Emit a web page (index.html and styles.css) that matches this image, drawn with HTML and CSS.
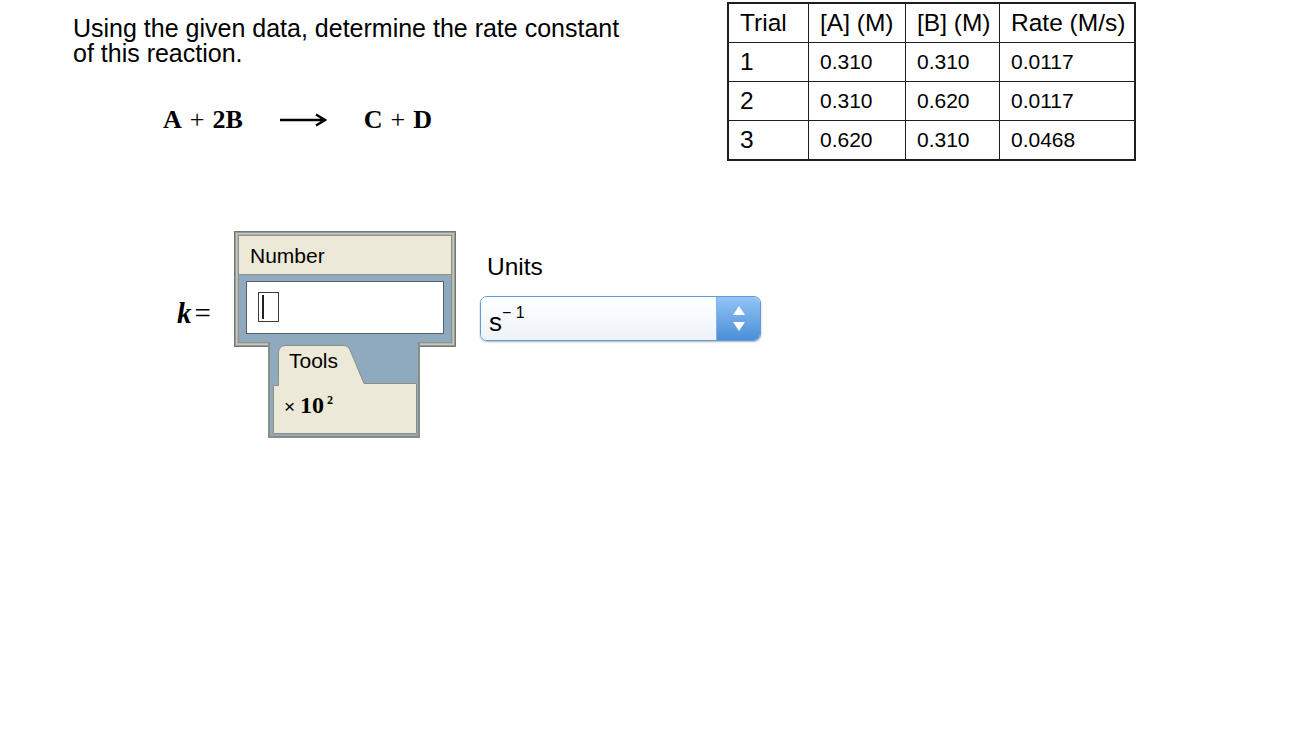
FILE: index.html
```html
<!DOCTYPE html>
<html>
<head>
<meta charset="utf-8">
<link rel="stylesheet" href="styles.css">
</head>
<body>
<div class="page">
  <div class="top">
    <div class="intro">
      <p class="question">Using the given data, determine the rate constant<br>of this reaction.</p>
      <div class="equation">
        <span class="eq-side">A<span class="op">+</span>2B</span>
        <svg class="arrow" width="48" height="14" viewBox="0 0 48 14"><path d="M1 7 H45 M37 1.5 L46 7 L37 12.5" fill="none" stroke="#000" stroke-width="2.6"/></svg>
        <span class="eq-side">C<span class="op">+</span>D</span>
      </div>
    </div>
    <table class="data">
      <tr class="head"><td class="c1">Trial</td><td class="c2">[A] (M)</td><td class="c3">[B] (M)</td><td class="c4">Rate (M/s)</td></tr>
      <tr><td class="num">1</td><td>0.310</td><td>0.310</td><td>0.0117</td></tr>
      <tr><td class="num">2</td><td>0.310</td><td>0.620</td><td>0.0117</td></tr>
      <tr><td class="num">3</td><td>0.620</td><td>0.310</td><td>0.0468</td></tr>
    </table>
  </div>

  <div class="answer-row">
    <div class="k-label"><i>k</i><span class="eq">=</span></div>
    <div class="widget">
      <div class="frame">
        <div class="frame-head">Number</div>
        <div class="frame-body">
          <div class="input"><span class="cursor-box"><span class="caret"></span></span></div>
        </div>
      </div>
      <div class="tools">
        <svg class="tools-shape" width="148" height="94" viewBox="0 0 148 94"><path d="M8.5 41.5 L8.5 11 Q8.5 3.5 16 3.5 L73 3.5 Q78 3.5 80 8 L94 41.5 L146.5 41.5 L146.5 91.5 L3.5 91.5 L3.5 43.5 L8.5 43.5 Z" fill="#ece9d8" stroke="#8c8f88" stroke-width="1"/></svg>
        <div class="tools-content">
          <div class="tab-label">Tools</div>
          <div class="panel-label"><span class="times">×</span> <b>10</b><sup>2</sup></div>
        </div>
      </div>
    </div>
    <div class="units">
      <div class="units-label">Units</div>
      <div class="select">
        <span class="sel-text">s<sup>−&nbsp;1</sup></span>
        <span class="sel-btn">
          <svg width="14" height="26" viewBox="0 0 14 26"><path d="M7 0 L13 9 L1 9 Z M1 16 L13 16 L7 25 Z" fill="#fff"/></svg>
        </span>
      </div>
    </div>
  </div>
</div>
</body>
</html>
```
FILE: styles.css
```css
body {
  margin: 0;
  background: #fff;
  color: #000;
  font-family: "Liberation Sans", Arial, sans-serif;
}

.top {
  display: flex;
  height: 160px;
}

.intro {
  width: 654px;
  padding-left: 73px;
  padding-top: 16px;
}

.question {
  margin: 0;
  font-size: 25px;
  line-height: 25px;
}

.equation {
  display: flex;
  align-items: center;
  margin-left: 90px;
  margin-top: 39px;
  height: 30px;
  font-family: "Liberation Serif", "Times New Roman", serif;
  font-weight: bold;
  font-size: 26px;
}

.eq-side .op {
  font-weight: normal;
  margin: 0 8px;
}

.arrow {
  margin: 0 37px 0 36px;
}

.data {
  margin-top: 2px;
  border-collapse: collapse;
  border: 2px solid #1e1e1e;
  height: 157px;
}

.data td {
  border: 1px solid #1e1e1e;
  padding: 0 0 0 11px;
  font-size: 21px;
  height: 38px;
  vertical-align: middle;
}

.data .head td,
.data td.num {
  font-size: 24.5px;
}

.data .c1 { width: 68px; }
.data .c2 { width: 85px; }
.data .c3 { width: 82px; }
.data .c4 { width: 123px; }

.answer-row {
  display: flex;
  align-items: flex-start;
  margin-top: 71px;
  padding-left: 177px;
}

.k-label {
  width: 57px;
  padding-top: 67px;
  line-height: 30px;
  font-family: "Liberation Serif", "Times New Roman", serif;
  font-size: 29px;
}

.k-label i {
  font-weight: bold;
}

.k-label .eq {
  margin-left: 3px;
}

.widget {
  width: 222px;
  display: flex;
  flex-direction: column;
}

.frame {
  padding: 5px;
  background: #a5a89f;
  box-shadow:
    inset 0 0 0 1px #73766f,
    inset 0 0 0 2px #989b93,
    inset 0 0 0 3px #c3c6bc,
    inset 0 0 0 4px #b3b6ac,
    inset 0 0 0 5px #8f928a;
}

.frame-head {
  background: #ece9d8;
  height: 36px;
  padding-top: 2px;
  padding-left: 11px;
  line-height: 36px;
  font-size: 21px;
  border-bottom: 1px solid #8e9288;
}

.frame-body {
  background: #8fa9be;
  padding: 6px 7px 8px 7px;
}

.input {
  height: 41px;
  background: #fff;
  border: 1px solid #55606a;
  padding: 10px 0 0 11px;
}

.cursor-box {
  display: block;
  width: 19px;
  height: 28px;
  border: 1px solid #3a3a3a;
}

.caret {
  display: block;
  width: 2px;
  height: 24px;
  margin: 2px 0 0 3px;
  background: #222;
}

.tools {
  width: 148px;
  height: 94px;
  margin-left: 34px;
  margin-top: -5px;
  border: 2px solid #8b8e87;
  border-top: none;
  background: #8fa9be;
  display: grid;
}

.tools-shape,
.tools-content {
  grid-area: 1 / 1;
}

.tools-content {
  display: flex;
  flex-direction: column;
}

.tab-label {
  font-size: 21px;
  line-height: 24px;
  padding-left: 19px;
  padding-top: 7px;
}

.panel-label {
  font-family: "Liberation Serif", "Times New Roman", serif;
  line-height: 28px;
  padding-left: 14px;
  padding-top: 18px;
}

.panel-label .times {
  font-family: "Liberation Sans", Arial, sans-serif;
  font-size: 19px;
}

.panel-label b {
  font-size: 24px;
  margin-left: 1px;
}

.panel-label sup {
  font-size: 12px;
  font-weight: bold;
  vertical-align: 9px;
  margin-left: 3px;
  line-height: 0;
}

.units {
  margin-left: 24px;
  padding-top: 21px;
  display: flex;
  flex-direction: column;
}

.units-label {
  font-size: 24.5px;
  line-height: 30px;
  padding-left: 7px;
}

.select {
  margin-top: 14px;
  width: 281px;
  height: 45px;
  box-sizing: border-box;
  border: 1px solid #5f9bd9;
  border-radius: 7px;
  overflow: hidden;
  display: flex;
  box-shadow: 0 1px 2px rgba(0, 0, 0, 0.3);
}

.sel-text {
  flex: 1;
  background: linear-gradient(#ffffff, #eef3fa);
  padding-left: 8px;
  padding-top: 8px;
  font-size: 26px;
  line-height: 35px;
}

.sel-text sup {
  font-size: 16px;
  vertical-align: 13px;
  line-height: 0;
  margin-left: 0;
}

.sel-btn {
  width: 43px;
  background: linear-gradient(#92c3f4, #4b8fd8);
  border-left: 1px solid #7db2ea;
  display: flex;
  align-items: center;
  justify-content: center;
}
```
